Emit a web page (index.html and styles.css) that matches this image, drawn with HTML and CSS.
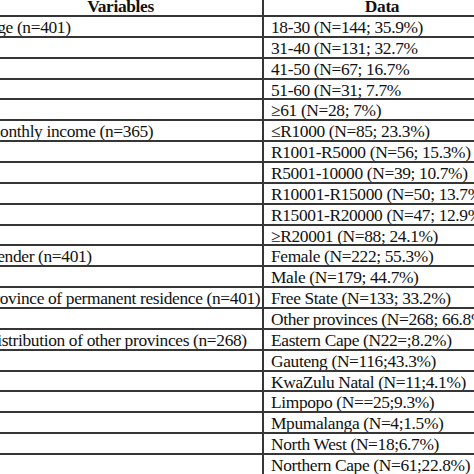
FILE: index.html
```html
<!DOCTYPE html>
<html>
<head>
<meta charset="utf-8">
<link rel="stylesheet" href="styles.css">
</head>
<body>
<table class="stats">
  <thead>
    <tr><th class="var">Variables</th><th class="data">Data</th></tr>
  </thead>
  <tbody>
    <tr><td class="var">Age (n=401)</td><td class="data">18-30 (N=144; 35.9%)</td></tr>
    <tr><td class="var"></td><td class="data">31-40 (N=131; 32.7%</td></tr>
    <tr><td class="var"></td><td class="data">41-50 (N=67; 16.7%</td></tr>
    <tr><td class="var"></td><td class="data">51-60 (N=31; 7.7%</td></tr>
    <tr><td class="var"></td><td class="data">≥61 (N=28; 7%)</td></tr>
    <tr><td class="var">Monthly income (n=365)</td><td class="data">≤R1000 (N=85; 23.3%)</td></tr>
    <tr><td class="var"></td><td class="data">R1001-R5000 (N=56; 15.3%)</td></tr>
    <tr><td class="var"></td><td class="data">R5001-10000 (N=39; 10.7%)</td></tr>
    <tr><td class="var"></td><td class="data">R10001-R15000 (N=50; 13.7%)</td></tr>
    <tr><td class="var"></td><td class="data">R15001-R20000 (N=47; 12.9%)</td></tr>
    <tr><td class="var"></td><td class="data">≥R20001 (N=88; 24.1%)</td></tr>
    <tr><td class="var">Gender (n=401)</td><td class="data">Female (N=222; 55.3%)</td></tr>
    <tr><td class="var"></td><td class="data">Male (N=179; 44.7%)</td></tr>
    <tr><td class="var">Province of permanent residence (n=401)</td><td class="data">Free State (N=133; 33.2%)</td></tr>
    <tr><td class="var"></td><td class="data">Other provinces (N=268; 66.8%)</td></tr>
    <tr><td class="var">Distribution of other provinces (n=268)</td><td class="data">Eastern Cape (N22=;8.2%)</td></tr>
    <tr><td class="var"></td><td class="data">Gauteng (N=116;43.3%)</td></tr>
    <tr><td class="var"></td><td class="data">KwaZulu Natal (N=11;4.1%)</td></tr>
    <tr><td class="var"></td><td class="data">Limpopo (N==25;9.3%)</td></tr>
    <tr><td class="var"></td><td class="data">Mpumalanga (N=4;1.5%)</td></tr>
    <tr><td class="var"></td><td class="data">North West (N=18;6.7%)</td></tr>
    <tr><td class="var"></td><td class="data">Northern Cape (N=61;22.8%)</td></tr>
  </tbody>
</table>
</body>
</html>
```

FILE: styles.css
```css
html, body {
  margin: 0;
  padding: 0;
  overflow: hidden;
  background: #ffffff;
  width: 474px;
  height: 474px;
}

.stats {
  border-collapse: separate;
  border-spacing: 0;
  margin: -3.86px 0 0 -20px;
  font-family: "Liberation Serif", "Times New Roman", serif;
  font-size: 17.4px;
  letter-spacing: -0.35px;
  color: #111111;
  table-layout: fixed;
  width: 519px;
}

.stats th,
.stats td {
  padding: 3px 6px 0 7px;
  line-height: 15.86px;
  border-bottom: 2px solid #363636;
  white-space: nowrap;
  overflow: hidden;
  text-align: left;
  font-weight: normal;
}

.stats th {
  font-weight: bold;
  text-align: center;
}

.stats .var {
  width: 271px;
  border-right: 2px solid #363636;
  padding-left: 5px;
}

.stats .data {
  width: 222px;
}
```
